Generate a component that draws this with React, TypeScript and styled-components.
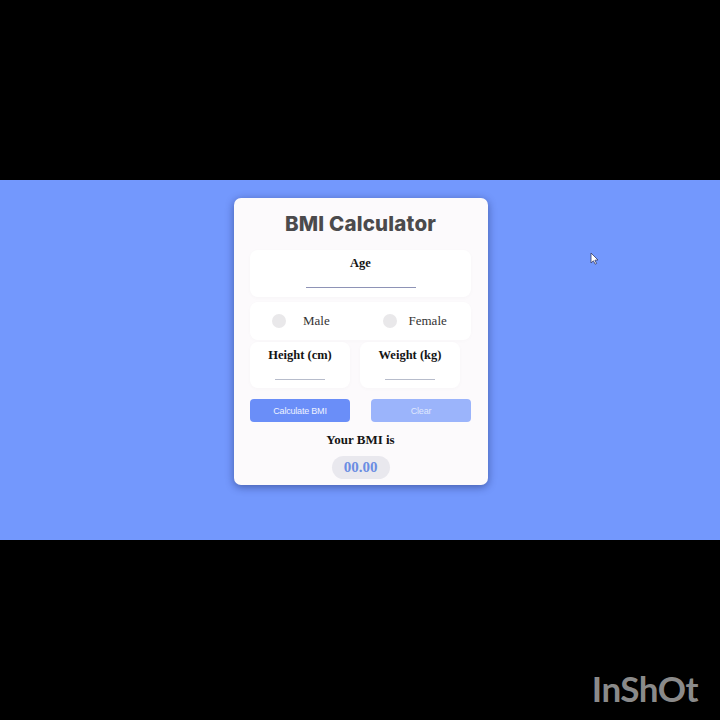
import React from "react";
import styled, { createGlobalStyle } from "styled-components";

const GlobalStyle = createGlobalStyle`
  html, body {
    margin: 0;
    padding: 0;
    background: #000;
  }
  #root {
    width: 720px;
    height: 720px;
  }
`;

const Screen = styled.div`
  position: relative;
  width: 720px;
  height: 720px;
  display: flex;
  flex-direction: column;
  background: #000;
`;

const Letterbox = styled.div`
  height: 180px;
  flex: none;
`;

const Band = styled.div`
  height: 360px;
  flex: none;
  background: #7398fd;
  display: flex;
  justify-content: center;
  align-items: flex-start;
  padding-top: 18px;
  padding-left: 2px;
  box-sizing: border-box;
`;

const Footer = styled.div`
  flex: 1;
  display: flex;
  justify-content: flex-end;
  align-items: flex-end;
  padding: 0 22px 14px 0;
`;

const Watermark = styled.span`
  font-family: "Lato", "DejaVu Sans", sans-serif;
  font-weight: 700;
  font-size: 35px;
  line-height: 35px;
  letter-spacing: -0.5px;
  color: #8a8a8a;
`;

const Card = styled.div`
  width: 254px;
  box-sizing: border-box;
  padding: 12px 17px 6px 16px;
  background: #fcfafc;
  border-radius: 7px;
  box-shadow: 0 2px 9px rgba(10, 20, 70, 0.45);
  display: flex;
  flex-direction: column;
  align-items: stretch;
`;

const Title = styled.h1`
  margin: 0;
  height: 28px;
  line-height: 28px;
  text-align: center;
  font-family: "Inter", "Open Sans", sans-serif;
  font-weight: 800;
  font-size: 20.5px;
  letter-spacing: 0.2px;
  color: #4b4a4c;
`;

const FieldBox = styled.div<{ $height: number }>`
  height: ${(p) => p.$height}px;
  background: #fff;
  border-radius: 8px;
  box-shadow: 0 1px 4px rgba(0, 0, 0, 0.025);
  display: flex;
  flex-direction: column;
  align-items: center;
  box-sizing: border-box;
  padding-top: 6px;
`;

const AgeBox = styled(FieldBox)`
  margin-top: 12px;
`;

const Label = styled.label`
  height: 15px;
  line-height: 15px;
  font-family: "Liberation Serif", serif;
  font-weight: 700;
  font-size: 12.5px;
  color: #141414;
`;

const LineInput = styled.input<{ $width: number }>`
  width: ${(p) => p.$width}px;
  height: 16px;
  box-sizing: border-box;
  margin-top: 1px;
  padding: 0;
  border: none;
  border-bottom: 1px solid ${(p) => (p.$width > 80 ? "#8e93b6" : "#b7bccb")};
  background: transparent;
  outline: none;
`;

const GenderRow = styled.div`
  margin-top: 5px;
  height: 38px;
  display: grid;
  grid-template-columns: 110.5px 110.5px;
  background: #fff;
  border-radius: 8px;
  box-shadow: 0 1px 4px rgba(0, 0, 0, 0.02);
`;

const Choice = styled.label<{ $gap: number }>`
  display: flex;
  align-items: center;
  padding-left: 22px;
  gap: ${(p) => p.$gap}px;
  font-family: "Liberation Serif", serif;
  font-size: 13px;
  color: #333;
`;

const Radio = styled.span`
  width: 14px;
  height: 14px;
  border-radius: 50%;
  background: #e9e8ea;
  flex: none;
`;

const PairRow = styled.div<{ $gap: number }>`
  display: grid;
  grid-template-columns: 100px 100px;
  column-gap: ${(p) => p.$gap}px;
`;

const MeasureRow = styled(PairRow)`
  margin-top: 2px;
`;

const ButtonRow = styled(PairRow)`
  margin-top: 11px;
`;

const Button = styled.button<{ $primary?: boolean }>`
  height: 23px;
  border: none;
  border-radius: 4px;
  padding: 0;
  font-family: "Liberation Sans", Arial, sans-serif;
  font-size: 9px;
  letter-spacing: -0.2px;
  color: ${(p) => (p.$primary ? "#eef2ff" : "#dfe7fe")};
  background: ${(p) => (p.$primary ? "#6a8ef8" : "#9bb4fb")};
  cursor: pointer;
`;

const ResultLabel = styled.div`
  margin-top: 10px;
  height: 16px;
  line-height: 16px;
  text-align: center;
  font-family: "Liberation Serif", serif;
  font-weight: 700;
  font-size: 13px;
  color: #141414;
`;

const ResultPill = styled.div`
  margin: 8px auto 0;
  width: 58px;
  height: 23px;
  line-height: 23px;
  border-radius: 12px;
  background: #e9e8ee;
  text-align: center;
  font-family: "Liberation Serif", serif;
  font-weight: 700;
  font-size: 15px;
  color: #6b8de3;
`;

const Pointer = styled.svg`
  position: absolute;
  left: 590px;
  top: 252px;
`;

function App() {
  return (
    <Screen>
      <GlobalStyle />
      <Letterbox />
      <Band>
        <Card>
          <Title>BMI Calculator</Title>
          <AgeBox $height={47}>
            <Label>Age</Label>
            <LineInput $width={110} />
          </AgeBox>
          <GenderRow>
            <Choice $gap={17}>
              <Radio />
              Male
            </Choice>
            <Choice $gap={12}>
              <Radio />
              Female
            </Choice>
          </GenderRow>
          <MeasureRow $gap={10}>
            <FieldBox $height={46}>
              <Label>Height (cm)</Label>
              <LineInput $width={50} />
            </FieldBox>
            <FieldBox $height={46}>
              <Label>Weight (kg)</Label>
              <LineInput $width={50} />
            </FieldBox>
          </MeasureRow>
          <ButtonRow $gap={21}>
            <Button $primary>Calculate BMI</Button>
            <Button>Clear</Button>
          </ButtonRow>
          <ResultLabel>Your BMI is</ResultLabel>
          <ResultPill>00.00</ResultPill>
        </Card>
      </Band>
      <Footer>
        <Watermark>InShOt</Watermark>
      </Footer>
      <Pointer width="9" height="13" viewBox="0 0 9 13">
        <path
          d="M1 1 L1 11 L3.4 8.8 L5.2 12.2 L6.6 11.5 L4.9 8.2 L8 8 Z"
          fill="#fff"
          stroke="#333a66"
          strokeWidth="0.8"
          strokeLinejoin="round"
        />
      </Pointer>
    </Screen>
  );
}

export default App;
